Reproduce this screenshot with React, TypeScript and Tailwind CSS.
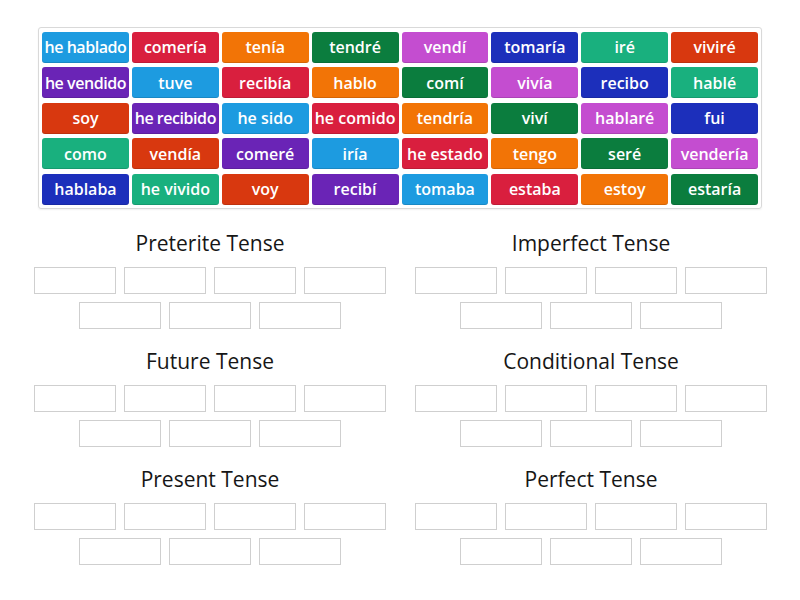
import React from "react";

const C = {
  blue: "bg-[#1d9be0]",
  crimson: "bg-[#d91f3e]",
  orange: "bg-[#f27406]",
  dkgreen: "bg-[#0b7d3e]",
  magenta: "bg-[#c44dd0]",
  navy: "bg-[#1c2fbb]",
  teal: "bg-[#19b07e]",
  redorange: "bg-[#d8380f]",
  purple: "bg-[#6a24b6]",
};

const tiles: [string, string][] = [
  ["he hablado", C.blue], ["comería", C.crimson], ["tenía", C.orange], ["tendré", C.dkgreen], ["vendí", C.magenta], ["tomaría", C.navy], ["iré", C.teal], ["viviré", C.redorange],
  ["he vendido", C.purple], ["tuve", C.blue], ["recibía", C.crimson], ["hablo", C.orange], ["comí", C.dkgreen], ["vivía", C.magenta], ["recibo", C.navy], ["hablé", C.teal],
  ["soy", C.redorange], ["he recibido", C.purple], ["he sido", C.blue], ["he comido", C.crimson], ["tendría", C.orange], ["viví", C.dkgreen], ["hablaré", C.magenta], ["fui", C.navy],
  ["como", C.teal], ["vendía", C.redorange], ["comeré", C.purple], ["iría", C.blue], ["he estado", C.crimson], ["tengo", C.orange], ["seré", C.dkgreen], ["vendería", C.magenta],
  ["hablaba", C.navy], ["he vivido", C.teal], ["voy", C.redorange], ["recibí", C.purple], ["tomaba", C.blue], ["estaba", C.crimson], ["estoy", C.orange], ["estaría", C.dkgreen],
];

const small = new Set(["he hablado", "he vendido", "he recibido"]);

const sections = [
  "Preterite Tense", "Imperfect Tense",
  "Future Tense", "Conditional Tense",
  "Present Tense", "Perfect Tense",
];

function Box() {
  return <div className="w-[82px] h-[27px] border border-[#cfcfcf] bg-white" />;
}

function Section({ title }: { title: string }) {
  return (
    <div className="flex flex-col items-center mb-[17px]">
      <div className="h-[30px] leading-[30px] text-[21px] text-[#161616]">{title}</div>
      <div className="mt-[9px] flex flex-col items-center gap-y-[8px]">
        <div className="flex gap-x-[8px]">
          <Box /><Box /><Box /><Box />
        </div>
        <div className="flex gap-x-[8px]">
          <Box /><Box /><Box />
        </div>
      </div>
    </div>
  );
}

export default function App() {
  return (
    <div className="w-[800px] h-[600px] bg-white overflow-hidden" style={{ fontFamily: '"Open Sans", "Noto Sans", sans-serif' }}>
      <div className="pt-[27px] pl-[38px]">
        <div className="w-[724px] border border-[#d9d9d9] rounded-[3px] px-[3px] py-[3.5px] grid grid-cols-8 gap-x-[3px] gap-y-[4.5px] shadow-[0_1px_2px_rgba(0,0,0,0.06)]">
          {tiles.map(([t, c], i) => (
            <div
              key={i}
              className={`${c} h-[31px] rounded-[3px] flex items-center justify-center text-white text-[16px] ${small.has(t) ? "tracking-[-0.45px]" : ""} font-semibold whitespace-nowrap overflow-hidden shadow-[inset_0_-1px_0_rgba(0,0,0,0.12)]`}
            >
              {t}
            </div>
          ))}
        </div>
      </div>
      <div className="mt-[19px] px-[34px] grid grid-cols-[352px_352px] gap-x-[29px]">
        {sections.map((s) => (
          <Section key={s} title={s} />
        ))}
      </div>
    </div>
  );
}
